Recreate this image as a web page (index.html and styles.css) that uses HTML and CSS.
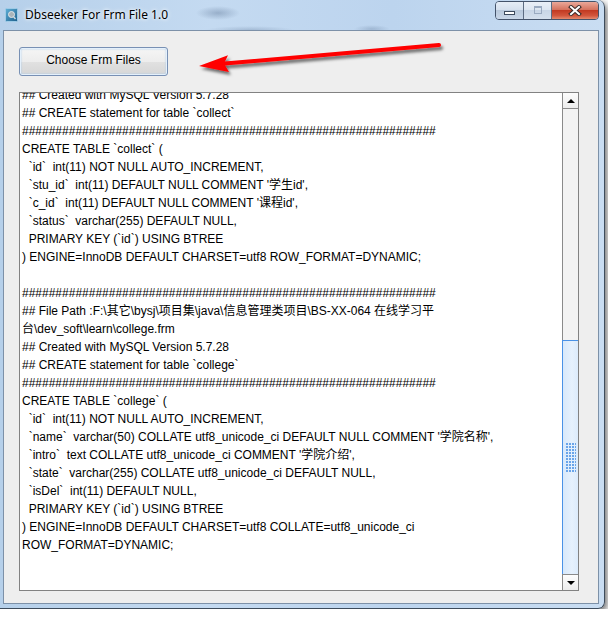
FILE: index.html
```html
<!DOCTYPE html>
<html lang="en">
<head>
    <meta charset="UTF-8">
    <title>Dbseeker For Frm File 1.0</title>
    <link rel="stylesheet" href="styles.css">
</head>
<body>
    <div class="window">
        <div class="titlebar">
            <svg class="app-icon" width="13" height="14" viewBox="0 0 13 14">
                <defs>
                    <linearGradient id="ig" x1="0" y1="0" x2="1" y2="1">
                        <stop offset="0" stop-color="#5fb0d8"/>
                        <stop offset="1" stop-color="#1d5f8c"/>
                    </linearGradient>
                </defs>
                <rect x="0.5" y="0.5" width="12" height="13" rx="1" fill="url(#ig)" stroke="#9fcbe6"/>
                <circle cx="6.5" cy="6.5" r="3" fill="#a9b4ba" stroke="#dfe6ea" stroke-width="1"/>
                <line x1="8.6" y1="8.8" x2="10.5" y2="11" stroke="#cfd8dd" stroke-width="1.4"/>
            </svg>
            <span class="title">Dbseeker For Frm File 1.0</span>
            <div class="caption-buttons">
                <div class="cap-btn cap-min"><span class="min-glyph"></span></div>
                <div class="cap-btn cap-max"><span class="max-glyph"></span></div>
                <div class="cap-btn cap-close">
                    <svg width="14" height="11" viewBox="0 0 14 11">
                        <path d="M3 2 L11 9 M11 2 L3 9" stroke="#3a2a28" stroke-width="4" stroke-linecap="square"/>
                        <path d="M3 2 L11 9 M11 2 L3 9" stroke="#fff" stroke-width="2" stroke-linecap="square"/>
                    </svg>
                </div>
            </div>
        </div>

        <div class="client">
            <button class="choose-btn">Choose Frm Files</button>
            <div class="scroll-pane">
                <div class="text-view">
                    <div class="first-line">## Created with MySQL Version 5.7.28</div>
<pre>## CREATE statement for table `collect`
##############################################################
CREATE TABLE `collect` (
  `id`  int(11) NOT NULL AUTO_INCREMENT,
  `stu_id`  int(11) DEFAULT NULL COMMENT '学生id',
  `c_id`  int(11) DEFAULT NULL COMMENT '课程id',
  `status`  varchar(255) DEFAULT NULL,
  PRIMARY KEY (`id`) USING BTREE
) ENGINE=InnoDB DEFAULT CHARSET=utf8 ROW_FORMAT=DYNAMIC;

##############################################################
## File Path :F:\其它\bysj\项目集\java\信息管理类项目\BS-XX-064 在线学习平
台\dev_soft\learn\college.frm
## Created with MySQL Version 5.7.28
## CREATE statement for table `college`
##############################################################
CREATE TABLE `college` (
  `id`  int(11) NOT NULL AUTO_INCREMENT,
  `name`  varchar(50) COLLATE utf8_unicode_ci DEFAULT NULL COMMENT '学院名称',
  `intro`  text COLLATE utf8_unicode_ci COMMENT '学院介绍',
  `state`  varchar(255) COLLATE utf8_unicode_ci DEFAULT NULL,
  `isDel`  int(11) DEFAULT NULL,
  PRIMARY KEY (`id`) USING BTREE
) ENGINE=InnoDB DEFAULT CHARSET=utf8 COLLATE=utf8_unicode_ci
ROW_FORMAT=DYNAMIC;
</pre>
                </div>
                <div class="scrollbar">
                    <div class="sb-btn sb-up"><span class="tri-up"></span></div>
                    <div class="sb-track">
                        <div class="sb-thumb"><span class="grip"></span></div>
                    </div>
                    <div class="sb-btn sb-down"><span class="tri-down"></span></div>
                </div>
            </div>
        </div>

        <!-- annotation arrow drawn over the window -->
        <svg class="arrow" width="262" height="46" viewBox="190 34 262 46">
            <defs>
                <filter id="shadow" x="-10%" y="-50%" width="130%" height="250%">
                    <feDropShadow dx="2" dy="3" stdDeviation="1.6" flood-color="#000" flood-opacity="0.55"/>
                </filter>
            </defs>
            <g filter="url(#shadow)" fill="#f00">
                <line x1="439" y1="45" x2="222" y2="63.8" stroke="#f00" stroke-width="4" stroke-linecap="round"/>
                <polygon points="199,66 228,55.3 224,63.6 229,72"/>
            </g>
        </svg>
    </div>
</body>
</html>
```

FILE: styles.css
```css
body {
    margin: 0;
    background: #fff;
    font-family: "Liberation Sans", "Noto Sans CJK SC", sans-serif;
}
.window {
    position: relative;
    width: 605px;
    height: 609px;
    box-sizing: border-box;
    display: flex;
    flex-direction: column;
    border-right: 1px solid #3e4c5c;
    border-bottom: 1px solid #3e4c5c;
    border-radius: 0 7px 7px 0;
    background:
        radial-gradient(ellipse 22px 7px at 218px 13px, rgba(70, 95, 130, 0.35), transparent),
        radial-gradient(ellipse 45px 4px at 250px 30px, rgba(70, 95, 130, 0.25), transparent),
        radial-gradient(ellipse 18px 4px at 372px 29px, rgba(70, 95, 130, 0.25), transparent),
        linear-gradient(to right, #b6d0ea, #c4daf1 35%, #bcd4ee 65%, #c9ddf2);
    box-shadow: 2px 3px 7px rgba(0, 0, 0, 0.6);
}
.titlebar {
    height: 30px;
    flex-shrink: 0;
    display: flex;
    align-items: flex-start;
    padding-left: 5px;
}
.app-icon {
    margin-top: 8px;
}
.title {
    margin: 7px 0 0 7px;
    font: 12px/16px "Noto Sans", sans-serif;
    color: #000;
    text-shadow: 0 0 5px #fff, 0 0 3px rgba(255, 255, 255, 0.8);
}
.caption-buttons {
    margin: 1px 5px 0 auto;
    height: 19px;
    box-sizing: border-box;
    display: flex;
    border: 1px solid #44536a;
    border-radius: 4px;
    overflow: hidden;
}
.cap-btn {
    display: flex;
    justify-content: center;
    align-items: center;
}
.cap-min, .cap-max {
    width: 27px;
    border-right: 1px solid #5d6c82;
    background: linear-gradient(#e6edf6, #d6e1ee 45%, #b9c9dc 50%, #c9d7e8);
}
.cap-max {
    background: linear-gradient(#e9eff7, #dde6f1 45%, #c9d6e6 50%, #d5e0ed);
}
.cap-close {
    width: 46px;
    background: linear-gradient(#eaa899, #d5735f 45%, #c23a22 50%, #d2563c 80%, #e58a6e);
}
.min-glyph {
    width: 9px;
    height: 2px;
    margin-top: 4px;
    background: #fff;
    border: 1px solid #3d4b5e;
}
.max-glyph {
    width: 6px;
    height: 5px;
    margin-bottom: 2px;
    border: 1px solid #9aaac0;
    border-top-width: 2px;
}
.client {
    flex: 1;
    margin: 0 5px 4px 3px;
    border: 1px solid #7d91a8;
    background: #eeeeee;
    padding: 16px 0 0 15px;
    display: flex;
    flex-direction: column;
    align-items: flex-start;
}
.choose-btn {
    width: 149px;
    height: 29px;
    margin: 0;
    padding: 0 0 3px;
    font: 12px "Liberation Sans", sans-serif;
    color: #000;
    border: 1px solid #7890b4;
    border-radius: 3px;
    background: linear-gradient(#f5f5f5, #ededed 50%, #e1e1e1 51%, #d6d6d6);
    box-shadow: inset 0 0 0 1px #e4f0fb, inset 0 0 2px 1px #a8cbec;
}
.scroll-pane {
    margin-top: 16px;
    width: 560px;
    height: 499px;
    box-sizing: border-box;
    border: 1px solid #828282;
    background: #fff;
    display: flex;
}
.text-view {
    flex: 1;
    overflow: hidden;
    padding-left: 2px;
    font: 12px/18px "Liberation Sans", "Noto Sans CJK SC", sans-serif;
    color: #000;
}
.first-line {
    margin-top: -7.5px;
    white-space: pre;
}
.text-view pre {
    margin: 0;
    font: inherit;
}
.scrollbar {
    width: 16px;
    display: flex;
    flex-direction: column;
}
.sb-btn {
    height: 16px;
    box-sizing: border-box;
    border-left: 1px solid #8a8a8a;
    background: linear-gradient(#fdfdfd, #ececec);
    display: flex;
    justify-content: center;
    align-items: center;
}
.sb-up {
    border-bottom: 1px solid #8a8a8a;
}
.sb-down {
    border-top: 1px solid #8a8a8a;
}
.tri-up, .tri-down {
    width: 0;
    height: 0;
    border-left: 4px solid transparent;
    border-right: 4px solid transparent;
}
.tri-up {
    border-bottom: 4px solid #000;
}
.tri-down {
    border-top: 4px solid #000;
}
.sb-track {
    flex: 1;
    display: flex;
    flex-direction: column;
    padding-top: 231px;
    border-left: 1px solid #8a8a8a;
    background: #f3f3f3;
}
.sb-thumb {
    flex: 1;
    margin-left: -1px;
    border-top: 1px solid #4a92e6;
    border-left: 1px solid #4a92e6;
    background: linear-gradient(to right, #d8e9fb, #e6f1fd 60%, #dcebfb);
    display: flex;
    justify-content: center;
    align-items: center;
}
.grip {
    width: 10px;
    height: 30px;
    background: radial-gradient(circle at 1px 1px, #6aa5ea 0.9px, transparent 1.1px) 0 0 / 3px 3px;
}
.arrow {
    position: absolute;
    left: 190px;
    top: 34px;
    pointer-events: none;
}
```
